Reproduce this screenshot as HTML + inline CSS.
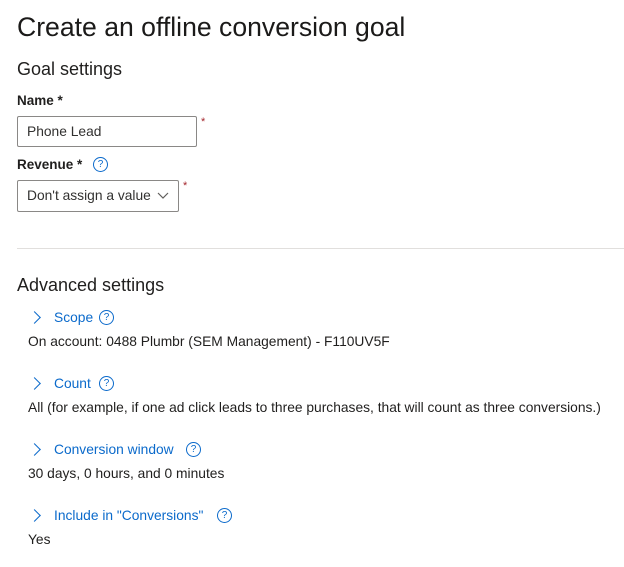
<!DOCTYPE html>
<html><head><meta charset="utf-8"><style>
body{margin:0;width:624px;height:567px;background:#fff;font-family:"Liberation Sans",sans-serif;color:#201f1e;position:relative;overflow:hidden}
.a{position:absolute;white-space:nowrap}
.t{left:17px;top:10px;font-size:26.6px;line-height:34px;color:#1b1a19}
.h{font-size:18px;line-height:24px;left:17px}
.l{font-size:13.5px;font-weight:bold;left:17px}
.box{position:absolute;border:1px solid #8a8886;border-radius:2px;box-sizing:border-box;font-size:13.8px;color:#323130;padding-left:9px}
.st{position:absolute;color:#a4262c;font-size:11px}
.q{position:absolute;width:13px;height:13px;border:1.2px solid #0b6acb;border-radius:50%;color:#0b6acb;font-size:10px;line-height:13px;text-align:center}
.lk{color:#0b6acb;font-size:13.8px;left:54px}
.v{font-size:13.8px;left:28px}
.chev{position:absolute;left:30px;width:8px;height:8px;border-right:1.5px solid #0b6acb;border-top:1.5px solid #0b6acb;transform:rotate(45deg)}
</style></head><body>
<div class="a t">Create an offline conversion goal</div>
<div class="a h" style="top:57px">Goal settings</div>
<div class="a l" style="top:93px">Name *</div>
<div class="box" style="left:17px;top:116px;width:180px;height:31px;line-height:29px">Phone Lead</div>
<div class="st" style="left:201px;top:116px">*</div>
<div class="a l" style="top:157px">Revenue *</div>
<div class="q" style="left:93px;top:157px">?</div>
<div class="box" style="left:17px;top:180px;width:162px;height:32px;line-height:30px">Don't assign a value</div>
<svg style="position:absolute;left:157px;top:192px" width="12" height="8"><path d="M1 1 L6 6 L11 1" fill="none" stroke="#605e5c" stroke-width="1.2"/></svg>
<div class="st" style="left:183px;top:180px">*</div>
<div style="position:absolute;left:17px;top:248px;width:607px;height:1px;background:#e1dfdd"></div>
<div class="a h" style="top:273px">Advanced settings</div>

<div class="chev" style="top:313px"></div>
<div class="a lk" style="top:310px">Scope</div>
<div class="q" style="left:99px;top:310px">?</div>
<div class="a v" style="top:334px">On account: 0488 Plumbr (SEM Management) - F110UV5F</div>

<div class="chev" style="top:379px"></div>
<div class="a lk" style="top:376px">Count</div>
<div class="q" style="left:99px;top:376px">?</div>
<div class="a v" style="top:400px;font-size:13.8px">All (for example, if one ad click leads to three purchases, that will count as three conversions.)</div>

<div class="chev" style="top:445px"></div>
<div class="a lk" style="top:442px">Conversion window</div>
<div class="q" style="left:186px;top:442px">?</div>
<div class="a v" style="top:466px">30 days, 0 hours, and 0 minutes</div>

<div class="chev" style="top:511px"></div>
<div class="a lk" style="top:508px">Include in "Conversions"</div>
<div class="q" style="left:217px;top:508px">?</div>
<div class="a v" style="top:532px">Yes</div>
</body></html>
